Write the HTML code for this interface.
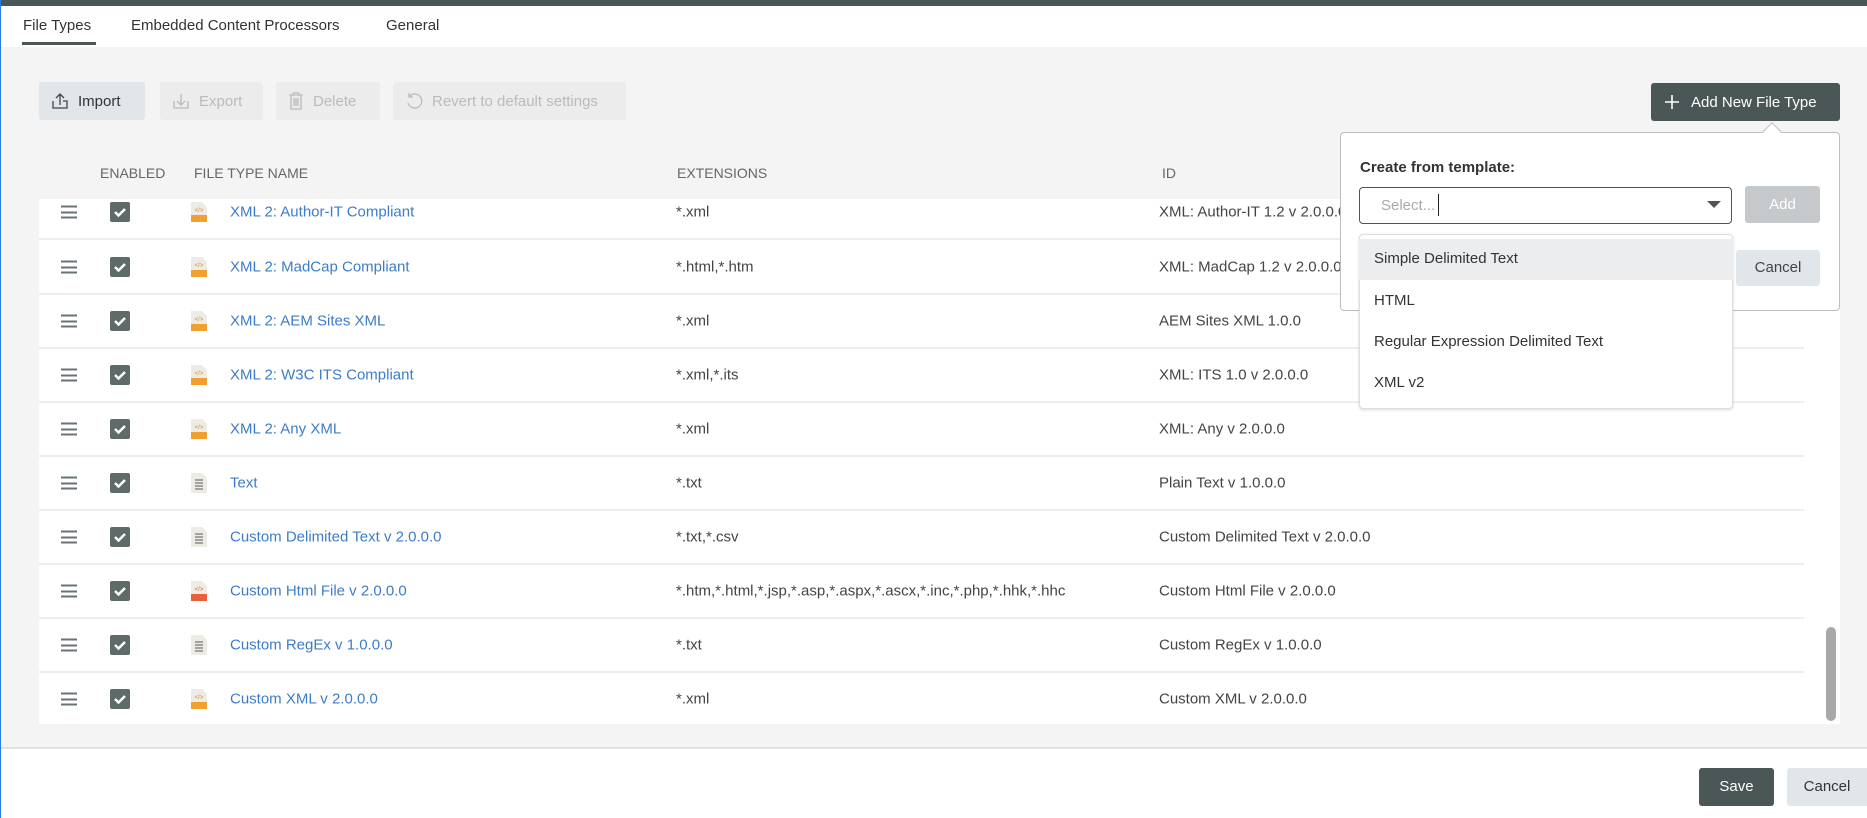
<!DOCTYPE html>
<html><head><meta charset="utf-8"><style>
*{box-sizing:border-box;margin:0;padding:0}
body{width:1867px;height:818px;overflow:hidden;background:#fff;font-family:"Liberation Sans",sans-serif;color:#333;position:relative}
.abs{position:absolute}
.top{left:0;top:0;width:1867px;height:6px;background:#4b5657}
.tabs{left:0;top:6px;width:1867px;height:41px;background:#fff}
.tab{top:17px;font-size:15px;color:#333}
.main{left:0;top:47px;width:1867px;height:702px;background:#f4f4f4;border-bottom:2px solid #e2e2e2}
.lb{left:0;top:0;width:1px;height:818px;background:#2a7de1}
.btn{height:38px;top:82px;border-radius:3px;background:#ececec;color:#bbb;font-size:15px;display:flex;align-items:center;padding-left:12px;gap:9px}
.hdr{top:165px;font-size:14px;color:#666}
.table{left:39px;top:199px;width:1765px;height:525px;background:#fff;overflow:hidden}
.row{position:absolute;left:0;width:1765px;height:54px;border-bottom:2px solid #eee}
.row .c{position:absolute;font-size:15px;top:50%;transform:translateY(-50%);white-space:nowrap}
.name{left:191px;color:#3d7cc9}
.ext{left:637px;color:#444}
.id{left:1120px;color:#444}
.ham{left:22px;top:50%;transform:translateY(-50%);width:16px;height:13px;position:absolute;border-top:2px solid #6a7477;border-bottom:2px solid #6a7477}
.ham:after{content:"";position:absolute;left:0;top:3.5px;width:16px;height:2px;background:#6a7477}
.cb{position:absolute;left:71px;top:50%;transform:translateY(-50%);width:20px;height:20px;background:#5f6b69;border-radius:2px}
.fi{position:absolute;left:152px;top:50%;transform:translateY(-50%)}
</style></head><body>
<div class="abs top"></div>
<div class="abs tabs"></div>
<div class="abs tab" style="left:23px">File Types</div>
<div class="abs" style="left:22px;top:42px;width:74px;height:3px;background:#4b5657"></div>
<div class="abs tab" style="left:131px">Embedded Content Processors</div>
<div class="abs tab" style="left:386px">General</div>
<div class="abs main"></div>
<div class="abs lb"></div>

<div class="abs btn" style="left:39px;width:106px;background:#e1e6ea;color:#333"><svg width="18" height="18" viewBox="0 0 18 18" fill="none" stroke="#444" stroke-width="1.3"><path d="M9 13V2M5 6l4-4 4 4M2 9v7h14V9h-4"/></svg>Import</div>
<div class="abs btn" style="left:160px;width:103px"><svg width="18" height="18" viewBox="0 0 18 18" fill="none" stroke="#bbb" stroke-width="1.3"><path d="M9 2v11M5 9l4 4 4-4M2 9v7h14V9"/></svg>Export</div>
<div class="abs btn" style="left:276px;width:104px"><svg width="16" height="18" viewBox="0 0 16 18" fill="none" stroke="#bbb" stroke-width="1.3"><path d="M1 3h14M5 3V1h6v2M3 3v14h10V3M6 6v8M8 6v8M10 6v8"/></svg>Delete</div>
<div class="abs btn" style="left:393px;width:233px"><svg width="18" height="18" viewBox="0 0 18 18" fill="none" stroke="#bbb" stroke-width="1.3"><path d="M4 5a7 7 0 1 1-1 6M4 1v4h4"/></svg>Revert to default settings</div>

<div class="abs hdr" style="left:100px">ENABLED</div>
<div class="abs hdr" style="left:194px">FILE TYPE NAME</div>
<div class="abs hdr" style="left:677px">EXTENSIONS</div>
<div class="abs hdr" style="left:1162px">ID</div>

<div class="abs table">
<div class="row" style="top:-13px"><div class="ham"></div><div class="cb"><svg width="20" height="20"><path d="M5 10l3.5 3.5L15 7" stroke="#fff" stroke-width="2.5" fill="none"/></svg></div><svg class="fi" width="16" height="20"><path d="M0 0h11l5 5v15H0z" fill="#ecebe4"/><rect x="0" y="13" width="16" height="7" fill="#f0a030"/><text x="8" y="10" font-size="6" fill="#e08a20" text-anchor="middle">&lt;/&gt;</text></svg><div class="c name">XML 2: Author-IT Compliant</div><div class="c ext">*.xml</div><div class="c id">XML: Author-IT 1.2 v 2.0.0.0</div></div>
<div class="row" style="top:42px"><div class="ham"></div><div class="cb"><svg width="20" height="20"><path d="M5 10l3.5 3.5L15 7" stroke="#fff" stroke-width="2.5" fill="none"/></svg></div><svg class="fi" width="16" height="20"><path d="M0 0h11l5 5v15H0z" fill="#ecebe4"/><rect x="0" y="13" width="16" height="7" fill="#f0a030"/><text x="8" y="10" font-size="6" fill="#e08a20" text-anchor="middle">&lt;/&gt;</text></svg><div class="c name">XML 2: MadCap Compliant</div><div class="c ext">*.html,*.htm</div><div class="c id">XML: MadCap 1.2 v 2.0.0.0</div></div>
<div class="row" style="top:96px"><div class="ham"></div><div class="cb"><svg width="20" height="20"><path d="M5 10l3.5 3.5L15 7" stroke="#fff" stroke-width="2.5" fill="none"/></svg></div><svg class="fi" width="16" height="20"><path d="M0 0h11l5 5v15H0z" fill="#ecebe4"/><rect x="0" y="13" width="16" height="7" fill="#f0a030"/><text x="8" y="10" font-size="6" fill="#e08a20" text-anchor="middle">&lt;/&gt;</text></svg><div class="c name">XML 2: AEM Sites XML</div><div class="c ext">*.xml</div><div class="c id">AEM Sites XML 1.0.0</div></div>
<div class="row" style="top:150px"><div class="ham"></div><div class="cb"><svg width="20" height="20"><path d="M5 10l3.5 3.5L15 7" stroke="#fff" stroke-width="2.5" fill="none"/></svg></div><svg class="fi" width="16" height="20"><path d="M0 0h11l5 5v15H0z" fill="#ecebe4"/><rect x="0" y="13" width="16" height="7" fill="#f0a030"/><text x="8" y="10" font-size="6" fill="#e08a20" text-anchor="middle">&lt;/&gt;</text></svg><div class="c name">XML 2: W3C ITS Compliant</div><div class="c ext">*.xml,*.its</div><div class="c id">XML: ITS 1.0 v 2.0.0.0</div></div>
<div class="row" style="top:204px"><div class="ham"></div><div class="cb"><svg width="20" height="20"><path d="M5 10l3.5 3.5L15 7" stroke="#fff" stroke-width="2.5" fill="none"/></svg></div><svg class="fi" width="16" height="20"><path d="M0 0h11l5 5v15H0z" fill="#ecebe4"/><rect x="0" y="13" width="16" height="7" fill="#f0a030"/><text x="8" y="10" font-size="6" fill="#e08a20" text-anchor="middle">&lt;/&gt;</text></svg><div class="c name">XML 2: Any XML</div><div class="c ext">*.xml</div><div class="c id">XML: Any v 2.0.0.0</div></div>
<div class="row" style="top:258px"><div class="ham"></div><div class="cb"><svg width="20" height="20"><path d="M5 10l3.5 3.5L15 7" stroke="#fff" stroke-width="2.5" fill="none"/></svg></div><svg class="fi" width="16" height="20"><path d="M0 0h11l5 5v15H0z" fill="#ecebe4"/><path d="M4 7h8M4 10h8M4 13h8M4 16h8" stroke="#777" stroke-width="1.2"/></svg><div class="c name">Text</div><div class="c ext">*.txt</div><div class="c id">Plain Text v 1.0.0.0</div></div>
<div class="row" style="top:312px"><div class="ham"></div><div class="cb"><svg width="20" height="20"><path d="M5 10l3.5 3.5L15 7" stroke="#fff" stroke-width="2.5" fill="none"/></svg></div><svg class="fi" width="16" height="20"><path d="M0 0h11l5 5v15H0z" fill="#ecebe4"/><path d="M4 7h8M4 10h8M4 13h8M4 16h8" stroke="#777" stroke-width="1.2"/></svg><div class="c name">Custom Delimited Text v 2.0.0.0</div><div class="c ext">*.txt,*.csv</div><div class="c id">Custom Delimited Text v 2.0.0.0</div></div>
<div class="row" style="top:366px"><div class="ham"></div><div class="cb"><svg width="20" height="20"><path d="M5 10l3.5 3.5L15 7" stroke="#fff" stroke-width="2.5" fill="none"/></svg></div><svg class="fi" width="16" height="20"><path d="M0 0h11l5 5v15H0z" fill="#ecebe4"/><rect x="0" y="13" width="16" height="7" fill="#e8603a"/><text x="8" y="10" font-size="6" fill="#e0603a" text-anchor="middle">&lt;/&gt;</text></svg><div class="c name">Custom Html File v 2.0.0.0</div><div class="c ext">*.htm,*.html,*.jsp,*.asp,*.aspx,*.ascx,*.inc,*.php,*.hhk,*.hhc</div><div class="c id">Custom Html File v 2.0.0.0</div></div>
<div class="row" style="top:420px"><div class="ham"></div><div class="cb"><svg width="20" height="20"><path d="M5 10l3.5 3.5L15 7" stroke="#fff" stroke-width="2.5" fill="none"/></svg></div><svg class="fi" width="16" height="20"><path d="M0 0h11l5 5v15H0z" fill="#ecebe4"/><path d="M4 7h8M4 10h8M4 13h8M4 16h8" stroke="#777" stroke-width="1.2"/></svg><div class="c name">Custom RegEx v 1.0.0.0</div><div class="c ext">*.txt</div><div class="c id">Custom RegEx v 1.0.0.0</div></div>
<div class="row" style="top:474px"><div class="ham"></div><div class="cb"><svg width="20" height="20"><path d="M5 10l3.5 3.5L15 7" stroke="#fff" stroke-width="2.5" fill="none"/></svg></div><svg class="fi" width="16" height="20"><path d="M0 0h11l5 5v15H0z" fill="#ecebe4"/><rect x="0" y="13" width="16" height="7" fill="#f0a030"/><text x="8" y="10" font-size="6" fill="#e08a20" text-anchor="middle">&lt;/&gt;</text></svg><div class="c name">Custom XML v 2.0.0.0</div><div class="c ext">*.xml</div><div class="c id">Custom XML v 2.0.0.0</div></div>
</div>
<div class="abs" style="left:1804px;top:199px;width:36px;height:525px;background:#fff"></div>
<div class="abs" style="left:1826px;top:627px;width:10px;height:94px;background:#a8a8a8;border-radius:5px"></div>

<div class="abs" style="left:1651px;top:83px;width:189px;height:38px;background:#4b5657;border-radius:3px;color:#fff;font-size:15px;display:flex;align-items:center;padding-left:14px;gap:12px"><svg width="14" height="14"><path d="M7 0v14M0 7h14" stroke="#fff" stroke-width="1.6"/></svg>Add New File Type</div>
<div class="abs" style="left:1340px;top:132px;width:500px;height:179px;background:#fff;border:1px solid #b8bfc4;border-radius:4px"></div>
<div class="abs" style="left:1765px;top:125px;width:14px;height:14px;background:#fff;border-left:1px solid #b8bfc4;border-top:1px solid #b8bfc4;transform:rotate(45deg)"></div>
<div class="abs" style="left:1360px;top:159px;font-size:15px;font-weight:bold;color:#333">Create from template:</div>
<div class="abs" style="left:1359px;top:187px;width:373px;height:37px;border:1px solid #4b5657;border-radius:4px"></div>
<div class="abs" style="left:1381px;top:197px;font-size:15px;color:#aaa">Select...</div>
<div class="abs" style="left:1438px;top:194px;width:1px;height:22px;background:#222"></div>
<svg class="abs" style="left:1707px;top:201px" width="14" height="8"><path d="M0 0h14L7 7z" fill="#555"/></svg>
<div class="abs" style="left:1745px;top:186px;width:75px;height:37px;background:#c6c9cb;border-radius:3px;color:#fff;font-size:15px;text-align:center;line-height:37px">Add</div>
<div class="abs" style="left:1736px;top:250px;width:84px;height:36px;background:#e1e6ea;border-radius:3px;color:#444;font-size:15px;text-align:center;line-height:36px">Cancel</div>
<div class="abs" style="left:1359px;top:234px;width:374px;height:175px;background:#fff;border:1px solid #ddd;border-radius:4px;box-shadow:0 1px 3px rgba(0,0,0,.15)"></div>
<div class="abs" style="left:1359px;top:239px;width:374px;height:41px;background:#ecedee"></div>
<div class="abs" style="left:1374px;top:250px;font-size:15px;color:#333">Simple Delimited Text</div>
<div class="abs" style="left:1374px;top:292px;font-size:15px;color:#333">HTML</div>
<div class="abs" style="left:1374px;top:333px;font-size:15px;color:#333">Regular Expression Delimited Text</div>
<div class="abs" style="left:1374px;top:374px;font-size:15px;color:#333">XML v2</div>

<div class="abs" style="left:1699px;top:768px;width:75px;height:38px;background:#4b5657;border-radius:3px;color:#fff;font-size:15px;text-align:center;line-height:38px">Save</div>
<div class="abs" style="left:1787px;top:768px;width:80px;height:38px;background:#e1e6ea;border-radius:3px 0 0 3px;color:#333;font-size:15px;text-align:center;line-height:38px">Cancel</div>
</body></html>
